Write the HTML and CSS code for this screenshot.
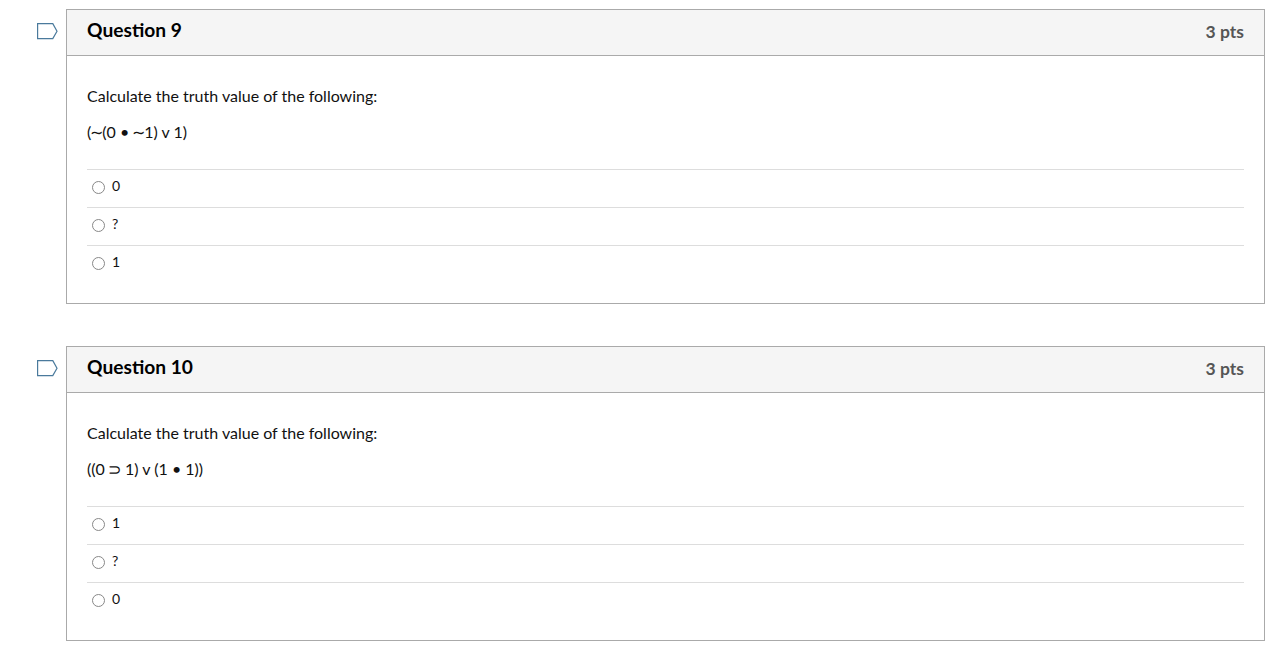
FILE: index.html
```html
<!DOCTYPE html>
<html lang="en">
<head>
<meta charset="utf-8">
<title>Quiz</title>
<link rel="stylesheet" href="styles.css">
</head>
<body>
<main class="quiz">
  <section class="question">
    <svg class="flag" width="21" height="17" viewBox="0 0 21 17" aria-hidden="true"><path d="M0.6 0.6H15.8L20 8.2L15.8 15.6H0.6Z"/></svg>
    <div class="card">
      <header class="head"><h2>Question 9</h2><span class="pts">3 pts</span></header>
      <div class="body">
        <p>Calculate the truth value of the following:</p>
        <p>(<span class="tilde">∼</span>(0 • <span class="tilde">∼</span>1) v 1)</p>
        <ul class="answers">
          <li><span class="radio"></span>0</li>
          <li><span class="radio"></span>?</li>
          <li><span class="radio"></span>1</li>
        </ul>
      </div>
    </div>
  </section>
  <section class="question">
    <svg class="flag" width="21" height="17" viewBox="0 0 21 17" aria-hidden="true"><path d="M0.6 0.6H15.8L20 8.2L15.8 15.6H0.6Z"/></svg>
    <div class="card">
      <header class="head"><h2>Question 10</h2><span class="pts">3 pts</span></header>
      <div class="body">
        <p>Calculate the truth value of the following:</p>
        <p>((0 <span class="horseshoe">⊃</span> 1) v (1 • 1))</p>
        <ul class="answers">
          <li><span class="radio"></span>1</li>
          <li><span class="radio"></span>?</li>
          <li><span class="radio"></span>0</li>
        </ul>
      </div>
    </div>
  </section>
</main>
</body>
</html>
```
FILE: styles.css
```css
* { box-sizing: border-box; }
html, body { margin: 0; padding: 0; background: #fff; }
body {
  font-family: Lato, "Noto Sans", sans-serif;
  color: #2d3b45;
  overflow: hidden;
}
.quiz {
  display: flex;
  flex-direction: column;
  gap: 42px;
  padding: 9px 3px 0 37px;
}
.question { display: flex; align-items: flex-start; }
.flag {
  flex: none;
  margin: 14px 8px 0 0;
  fill: none;
  stroke: #4a7a9c;
  stroke-width: 1.2;
}
.card {
  flex: 1;
  border: 1px solid #aaa;
  background: #fff;
}
.head {
  height: 46px;
  display: flex;
  align-items: center;
  justify-content: space-between;
  padding: 0 20px;
  background: #f5f5f5;
  border-bottom: 1px solid #aaa;
}
.head h2 {
  margin: 0 0 6px;
  font-size: 19.2px;
  font-weight: 700;
  color: #000;
}
.pts { margin-bottom: 2px; font-size: 17.5px; font-weight: 700; color: #555; }
.body { padding: 30px 20px 20px; }
.body p {
  margin: 0 0 16px;
  font-size: 16px;
  line-height: 20px;
  color: #111;
}
.tilde { margin-left: -1px; letter-spacing: -1px; }
.horseshoe { margin-left: -0.5px; letter-spacing: -0.5px; }
.answers {
  list-style: none;
  margin: 27px 0 0;
  padding: 0;
}
.answers li {
  height: 38px;
  display: flex;
  align-items: flex-start;
  padding: 7px 0 0 5px;
  border-top: 1px solid #ddd;
  font-size: 14px;
  line-height: 17px;
  color: #111;
}
.radio {
  width: 13px;
  height: 13px;
  margin: 4px 7px 0 0;
  border: 1px solid #888;
  border-radius: 50%;
  background: #fff;
}
```
